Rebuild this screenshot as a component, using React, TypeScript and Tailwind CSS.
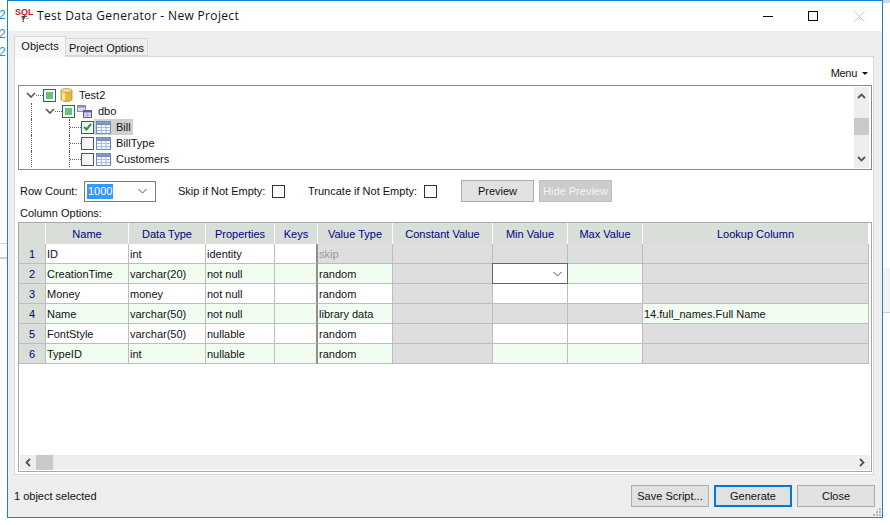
const font = "font-['Liberation_Sans',sans-serif]";

const WHITE = "bg-white";
const GREEN = "bg-[#f2fdf2]";
const OFF = "bg-[#dedede]";

type Cell = { text?: string; bg?: string; muted?: boolean; combo?: boolean };

const widths = [83, 77, 69, 43, 75, 100, 75, 75, 226];
const headers = ["Name", "Data Type", "Properties", "Keys", "Value Type", "Constant Value", "Min Value", "Max Value", "Lookup Column"];

const rows: { name: string; type: string; props: string; value: string; rest: Cell[] }[] = [
  { name: "ID", type: "int", props: "identity", value: "skip", rest: [{ bg: OFF }, { bg: OFF }, { bg: OFF }, { bg: OFF }] },
  { name: "CreationTime", type: "varchar(20)", props: "not null", value: "random", rest: [{ bg: OFF }, { combo: true }, {}, { bg: OFF }] },
  { name: "Money", type: "money", props: "not null", value: "random", rest: [{ bg: OFF }, {}, {}, { bg: OFF }] },
  { name: "Name", type: "varchar(50)", props: "not null", value: "library data", rest: [{ bg: OFF }, { bg: OFF }, { bg: OFF }, { text: "14.full_names.Full Name" }] },
  { name: "FontStyle", type: "varchar(50)", props: "nullable", value: "random", rest: [{ bg: OFF }, {}, {}, { bg: OFF }] },
  { name: "TypeID", type: "int", props: "nullable", value: "random", rest: [{ bg: OFF }, {}, {}, { bg: OFF }] },
];

function SqlIcon() {
  return (
    <svg width="18" height="16" viewBox="0 0 18 16" className="shrink-0">
      <text x="0" y="7" fontSize="9" fontWeight="700" fill="#d01818" fontFamily="Liberation Sans">SQL</text>
      <path d="M6.500 8h3.500v2.500H9v1.500H7.500v-2.500h1V9.500h-2z" fill="#444" />
      <rect x="7.500" y="12.500" width="1.500" height="1.500" fill="#555" />
      <path d="M10 10.500h4" stroke="#bbb" strokeWidth="1" />
    </svg>
  );
}

function DbIcon() {
  return (
    <svg width="13" height="14" viewBox="0 0 13 14" className="shrink-0">
      <path d="M1 2.500v9c0 1 2.500 2 5.500 2s5.500-1 5.500-2v-9z" fill="#eab83a" stroke="#a98a3c" strokeWidth="0.700" />
      <rect x="2" y="4" width="3" height="8.500" fill="#f8e7a6" />
      <ellipse cx="6.500" cy="2.500" rx="5.500" ry="2" fill="#f6e08f" stroke="#a98a3c" strokeWidth="0.700" />
    </svg>
  );
}

function SchemaIcon() {
  return (
    <svg width="15" height="13" viewBox="0 0 15 13" className="shrink-0">
      <rect x="0.500" y="0.500" width="8" height="6" fill="#d9d6ee" stroke="#8d8ac0" />
      <rect x="0.500" y="0.500" width="8" height="2" fill="#8d8ac0" />
      <rect x="6.500" y="5.500" width="8" height="7" fill="#e6e4f5" stroke="#5f5ca8" />
      <rect x="6.500" y="5.500" width="8" height="2" fill="#5f5ca8" />
      <path d="M7 10h7M10 8v4" stroke="#8d8ac0" strokeWidth="0.700" />
    </svg>
  );
}

function TableIcon() {
  return (
    <svg width="15" height="13" viewBox="0 0 15 13" className="shrink-0">
      <rect x="0.500" y="0.500" width="14" height="12" fill="#f4f7fb" stroke="#6f8db8" />
      <rect x="0.500" y="0.500" width="14" height="3" fill="#7d9cc9" stroke="#6f8db8" />
      <path d="M1 6.500h13M1 9.500h13M5.500 4v8.500M10 4v8.500" stroke="#a9bcd8" />
    </svg>
  );
}

function Chevron() {
  return (
    <svg width="10" height="6" viewBox="0 0 10 6" className="shrink-0">
      <path d="M1 1l4 4 4-4" fill="none" stroke="#555" strokeWidth="1.600" />
    </svg>
  );
}

function Guide({ ml }: { ml: number }) {
  return <div className="h-4 border-l border-dotted border-[#555] shrink-0" style={{ marginLeft: ml }} />;
}

function Dots({ w }: { w: number }) {
  return <div className="border-t border-dotted border-[#666] shrink-0" style={{ width: w }} />;
}

function TreeCheck({ state }: { state: "mixed" | "checked" | "none" }) {
  return (
    <div className="w-[13px] h-[13px] shrink-0 border border-[#2b5f8a] bg-gradient-to-br from-[#eeeeee] to-white flex items-center justify-center">
      {state === "mixed" && <div className="w-[7px] h-[7px] bg-[#6cc07a]" />}
      {state === "checked" && (
        <svg width="9" height="8" viewBox="0 0 9 8">
          <path d="M1 4l2.500 2.500L8 1" fill="none" stroke="#1f9a2e" strokeWidth="2" />
        </svg>
      )}
    </div>
  );
}

function TableRow({ label, checked, selected }: { label: string; checked?: boolean; selected?: boolean }) {
  return (
    <div className="flex items-center h-4">
      <Guide ml={12} />
      <Guide ml={37} />
      <Dots w={11} />
      <TreeCheck state={checked ? "checked" : "none"} />
      <div className={`flex items-center h-4 pl-[2px] ${selected ? "bg-[#d0d0d0] w-[39px]" : ""}`}>
        <TableIcon />
        <span className="ml-[5px] text-[#111]">{label}</span>
      </div>
    </div>
  );
}

function Tree() {
  return (
    <div className="h-[85px] border border-[#8a8a90] flex bg-white">
      <div className="flex-1 pt-px">
        <div className="flex items-center h-4 pl-[7px]">
          <Chevron />
          <Dots w={7} />
          <TreeCheck state="mixed" />
          <div className="ml-1"><DbIcon /></div>
          <span className="ml-[6px] text-[#111]">Test2</span>
        </div>
        <div className="flex items-center h-4">
          <Guide ml={12} />
          <div className="ml-[13px]"><Chevron /></div>
          <Dots w={7} />
          <TreeCheck state="mixed" />
          <div className="ml-[2px]"><SchemaIcon /></div>
          <span className="ml-[6px] text-[#111]">dbo</span>
        </div>
        <TableRow label="Bill" checked selected />
        <TableRow label="BillType" />
        <TableRow label="Customers" />
      </div>
      <div className="w-[15px] mr-[2px] my-px bg-[#eeeeee] flex flex-col items-center justify-between py-[6px]">
        <svg width="9" height="6" viewBox="0 0 9 6"><path d="M1 5l3.500-3.500L8 5" fill="none" stroke="#555" strokeWidth="1.800" /></svg>
        <div className="w-[15px] h-[17px] bg-[#c9c9c9] -mt-[2px]" />
        <svg width="9" height="6" viewBox="0 0 9 6"><path d="M1 1l3.500 3.500L8 1" fill="none" stroke="#555" strokeWidth="1.800" /></svg>
      </div>
    </div>
  );
}

function Toolbar() {
  return (
    <div className="flex items-center h-[22px] mt-[10px] text-[#111]">
      <span className="ml-[2px] w-[64px]">Row Count:</span>
      <div className="w-[72px] h-[21px] border border-[#7a7a7a] flex items-center pl-[2px] pr-[8px] justify-between">
        <span className="bg-[#3399ff] text-white px-px leading-[15px]">1000</span>
        <svg width="9" height="6" viewBox="0 0 9 6"><path d="M0.500 1l4 4 4-4" fill="none" stroke="#555" /></svg>
      </div>
      <span className="ml-[22px] w-[94px]">Skip if Not Empty:</span>
      <div className="w-[13px] h-[13px] border border-[#333]" />
      <span className="ml-[23px] w-[116px]">Truncate if Not Empty:</span>
      <div className="w-[13px] h-[13px] border border-[#333]" />
      <div className="ml-[24px] w-[73px] h-[22px] bg-[#e1e1e1] border border-[#adadad] flex items-center justify-center">Preview</div>
      <div className="ml-[5px] w-[73px] h-[22px] bg-[#cccccc] border border-[#bfbfbf] flex items-center justify-center text-[#f4f4f4]">Hide Preview</div>
    </div>
  );
}

function GridRow({ index, row }: { index: number; row: (typeof rows)[number] }) {
  const base = index % 2 === 0 ? WHITE : GREEN;
  const cell = "h-5 border-b border-r px-px leading-[21px] whitespace-nowrap overflow-hidden";
  const line = "border-[#bdbdbd]";
  const skip = row.value === "skip";
  return (
    <div className="flex">
      <div className="w-[27px] h-5 bg-[#d8dfd9] border-b border-r border-[#bdbdbd] text-center text-[#000080] leading-[21px]">{index + 1}</div>
      <div className={`${cell} ${line} ${base}`} style={{ width: widths[0] }}>{row.name}</div>
      <div className={`${cell} ${line} ${base}`} style={{ width: widths[1] }}>{row.type}</div>
      <div className={`${cell} ${line} ${base}`} style={{ width: widths[2] }}>{row.props}</div>
      <div className={`h-5 border-b border-b-[#bdbdbd] border-r-2 border-r-[#8f8f8f] ${base}`} style={{ width: widths[3] }} />
      <div className={`${cell} ${line} ${skip ? OFF + " text-[#999]" : base}`} style={{ width: widths[4] }}>{row.value}</div>
      {row.rest.map((c, i) => (
        <div
          key={i}
          className={c.combo ? "h-5 -mt-px bg-white border border-[#666] flex items-center justify-end pr-[5px] -ml-px" : `${cell} ${line} ${c.bg ?? base}`}
          style={{ width: c.combo ? widths[5 + i] + 1 : widths[5 + i], height: c.combo ? 21 : undefined }}
        >
          {c.combo && <svg width="9" height="6" viewBox="0 0 9 6"><path d="M0.500 1l4 4 4-4" fill="none" stroke="#555" /></svg>}
          {c.text}
        </div>
      ))}
    </div>
  );
}

function Grid() {
  return (
    <div className="h-[250px] border border-[#a8a8a8] flex flex-col text-[#111]">
      <div className="flex h-[21px] shrink-0">
        <div className="w-[27px] bg-[#d8dfd9] border-r border-white" />
        {headers.map((h, i) => (
          <div key={h} className="bg-[#d8dfd9] border-r border-white text-center text-[#000080] leading-[22px]" style={{ width: widths[i] }}>
            {h}
          </div>
        ))}
      </div>
      <div className="flex-1">
        {rows.map((r, i) => (
          <GridRow key={r.name} index={i} row={r} />
        ))}
      </div>
      <div className="h-[15px] mx-px mb-px bg-[#eeeeee] flex items-center justify-between">
        <div className="flex items-center h-full">
          <svg width="16" height="15" viewBox="0 0 16 15"><path d="M10 4l-3.500 3.500L10 11" fill="none" stroke="#555" strokeWidth="1.800" /></svg>
          <div className="w-[17px] h-full bg-[#c9c9c9]" />
        </div>
        <svg width="16" height="15" viewBox="0 0 16 15"><path d="M6 4l3.500 3.500L6 11" fill="none" stroke="#555" strokeWidth="1.800" /></svg>
      </div>
    </div>
  );
}

function Footer() {
  return (
    <div className="flex-1 flex items-start justify-between pt-[10px] pl-[6px] pr-[7px] relative">
      <span className="mt-[3px] text-[#111]">1 object selected</span>
      <div className="flex gap-[5px] text-[#111]">
        <button className="w-[78px] h-[22px] bg-[#e1e1e1] border border-[#adadad]">Save Script...</button>
        <button className="w-[78px] h-[22px] bg-[#e1e1e1] border-2 border-[#0078d7]">Generate</button>
        <button className="w-[78px] h-[22px] bg-[#e1e1e1] border border-[#adadad]">Close</button>
      </div>
      <svg width="10" height="10" viewBox="0 0 10 10" className="absolute right-0 bottom-0">
        <path d="M7 1h2v2H7zM4 4h2v2H4zM7 4h2v2H7zM1 7h2v2H1zM4 7h2v2H4zM7 7h2v2H7z" fill="#b8b8b8" />
      </svg>
    </div>
  );
}

function Window() {
  return (
    <div className="w-[876px] h-[518px] border border-[#1583d8] bg-[#eeeeee] flex flex-col shrink-0">
      <div className="h-[30px] bg-white flex items-center pl-[7px] shrink-0">
        <SqlIcon />
        <span className="ml-[4px] text-[12px] tracking-[0.34px] text-[#111] font-['Open_Sans',sans-serif]">Test Data Generator - New Project</span>
        <div className="ml-auto flex items-center">
          <div className="w-[10px] h-px bg-black" />
          <div className="ml-[35px] w-[10px] h-[10px] border border-black" />
          <svg width="11" height="11" viewBox="0 0 11 11" className="ml-[36px] mr-[17px]">
            <path d="M0.500 0.500l10 10M10.500 0.500l-10 10" stroke="#c8c8c8" />
          </svg>
        </div>
      </div>
      <div className="flex items-end h-[25px] pl-[6px] shrink-0">
        <div className="w-[52px] h-[21px] pb-[2px] bg-[#f8f8f8] border border-b-0 border-[#d8d8d8] flex items-center justify-center text-[#111] relative top-px">Objects</div>
        <div className="w-[82px] h-[18px] pt-[2px] bg-[#eeeeee] border border-l-0 border-[#d8d8d8] flex items-center justify-center text-[#111]">Project Options</div>
      </div>
      <div className="ml-[6px] w-[860px] h-[419px] bg-white border border-[#d8d8d8] pl-[3px] pr-px shrink-0">
        <div className="h-[28px] flex items-center justify-end pr-[4px] pt-[4px] text-[#111]">
          <span className="tracking-[-0.3px]">Menu</span>
          <div className="ml-[5px] w-0 h-0 border-x-[3px] border-x-transparent border-t-[3px] border-t-[#111]" />
        </div>
        <Tree />
        <Toolbar />
        <div className="h-[17px] mt-[3px] pl-[2px] leading-[17px] text-[#111]">Column Options:</div>
        <Grid />
      </div>
      <Footer />
    </div>
  );
}

export default function App() {
  return (
    <div className={`${font} w-[890px] h-[525px] bg-white overflow-hidden flex text-[11px] antialiased`}>
      <div className="w-[7px] shrink-0 overflow-hidden text-[12px] text-[#2f8fc4]">
        <div className="mt-[6px] h-[19px] -ml-px">2</div>
        <div className="h-[18px] -ml-px">2</div>
        <div className="h-[200px] -ml-px">2</div>
        <div className="h-px bg-[#d0d0d0]" />
        <div className="h-[13px]" />
        <div className="h-[2px] bg-[#d0d0d0]" />
      </div>
      <Window />
      <div className="flex-1">
        <div className="h-[3px] bg-[#cfd8e8]" />
        <div className="h-[265px]" />
        <div className="h-[44px] bg-[#f2f2f2]" />
        <div className="h-px bg-[#cccccc]" />
      </div>
    </div>
  );
}
